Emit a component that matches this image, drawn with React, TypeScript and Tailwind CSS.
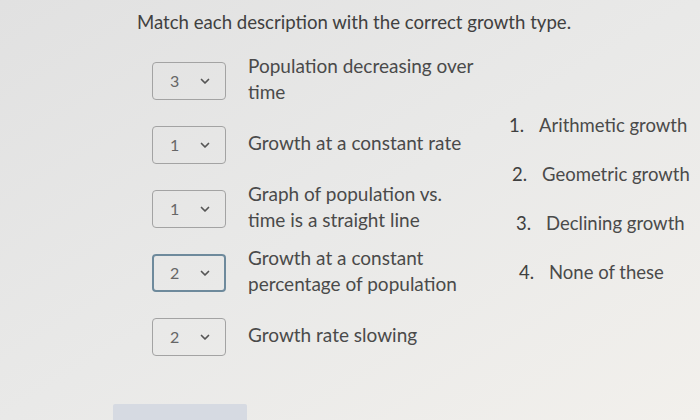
import React from 'react';

const rows = [
  { value: '3', text: 'Population decreasing over time', focused: false },
  { value: '1', text: 'Growth at a constant rate', focused: false },
  { value: '1', text: 'Graph of population vs. time is a straight line', focused: false },
  { value: '2', text: 'Growth at a constant percentage of population', focused: true },
  { value: '2', text: 'Growth rate slowing', focused: false },
];

const options = [
  { n: '1.', label: 'Arithmetic growth', pad: 'pl-0' },
  { n: '2.', label: 'Geometric growth', pad: 'pl-[3px]' },
  { n: '3.', label: 'Declining growth', pad: 'pl-[7px]' },
  { n: '4.', label: 'None of these', pad: 'pl-[10px]' },
];

function Chevron() {
  return (
    <svg width="10" height="7" viewBox="0 0 10 7" className="text-[#555]">
      <path d="M1.5 1.5l3.5 3.5 3.5-3.5" fill="none" stroke="currentColor" strokeWidth="1.7" strokeLinecap="round" strokeLinejoin="round" />
    </svg>
  );
}

function Select({ value, focused }: { value: string; focused: boolean }) {
  return (
    <div
      className={
        focused
          ? 'flex h-[38px] w-[74px] shrink-0 items-center rounded-[4px] border-2 border-[#6e8a9c] pl-[16px]'
          : 'flex h-[38px] w-[74px] shrink-0 items-center rounded-[4px] border border-[#a3a3a3] pl-[17px]'
      }
    >
      <span className="w-[30px] text-[16px] text-[#666]">{value}</span>
      <Chevron />
    </div>
  );
}

export default function App() {
  return (
    <div className="relative h-[420px] w-[700px] overflow-hidden bg-gradient-to-br from-[#e1e1e1] via-[#e9e9e8] to-[#f2f0ec] font-['Lato','Open_Sans',sans-serif] text-[#4a4a4a]">
      <h1 className="pl-[137px] pt-[10px] text-[18.6px] leading-[24px] text-[#404040]">
        Match each description with the correct growth type.
      </h1>

      <div className="mt-[15px] flex">
        <div className="flex flex-col pl-[152px]">
          {rows.map((row, i) => (
            <div key={i} className="flex h-[64px] items-center gap-[22px]">
              <Select value={row.value} focused={row.focused} />
              <p className="-mt-[5px] w-[228px] text-[19px] leading-[26px]">{row.text}</p>
            </div>
          ))}
        </div>

        <ol className="ml-[33px] flex flex-col pt-[64px]">
          {options.map((o) => (
            <li key={o.n} className={`flex h-[49px] text-[18.5px] leading-[24px] ${o.pad}`}>
              <span className="w-[30px] text-[#3f3f3f]">{o.n}</span>
              <span>{o.label}</span>
            </li>
          ))}
        </ol>
      </div>

      <div className="ml-[113px] mt-[35px] h-[20px] w-[134px] rounded-[2px] bg-[#d6dae2]" />
    </div>
  );
}
